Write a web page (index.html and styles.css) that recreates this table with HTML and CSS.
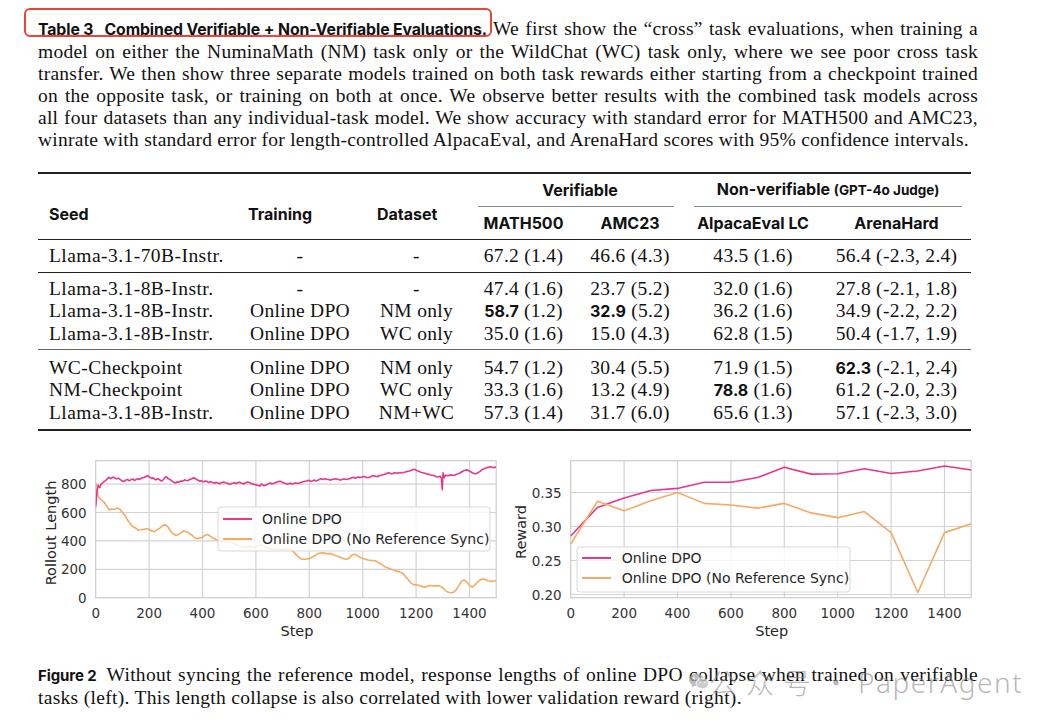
FILE: index.html
```html
<!DOCTYPE html>
<html lang="en">

<head>
    <meta charset="UTF-8">
    <meta name="viewport" content="width=device-width, initial-scale=1.0">
    <title>Table 3 / Figure 2</title>
    <link rel="stylesheet" href="styles.css">
</head>

<body>
    <div class="page">
        <!-- 表格标题 -->
        <div class="cap">
            <div class="mark"></div>
            <div class="ln"><b class="lbl">Table 3<span class="ttl">Combined Verifiable + Non-Verifiable Evaluations.</span></b> We first show the “cross” task evaluations, when training a</div>
            <div class="ln">model on either the NuminaMath (NM) task only or the WildChat (WC) task only, where we see poor cross task</div>
            <div class="ln">transfer. We then show three separate models trained on both task rewards either starting from a checkpoint trained</div>
            <div class="ln">on the opposite task, or training on both at once. We observe better results with the combined task models across</div>
            <div class="ln">all four datasets than any individual-task model. We show accuracy with standard error for MATH500 and AMC23,</div>
            <div class="ln last">winrate with standard error for length-controlled AlpacaEval, and ArenaHard scores with 95% confidence intervals.</div>
        </div>

        <!-- 结果表 -->
        <table class="tbl">
            <colgroup>
                <col class="c-seed">
                <col class="c-train">
                <col class="c-data">
                <col class="c-math">
                <col class="c-amc">
                <col class="c-alp">
                <col class="c-arena">
            </colgroup>
            <thead>
                <tr class="hd-top">
                    <th rowspan="2" class="side seed">Seed</th>
                    <th rowspan="2" class="side train">Training</th>
                    <th rowspan="2" class="side data">Dataset</th>
                    <th colspan="2"><div class="grp grp-v">Verifiable</div></th>
                    <th colspan="2"><div class="grp grp-n">Non-verifiable <small>(GPT-4o Judge)</small></div></th>
                </tr>
                <tr class="hd-sub">
                    <th>MATH500</th>
                    <th>AMC23</th>
                    <th>AlpacaEval LC</th>
                    <th>ArenaHard</th>
                </tr>
            </thead>
            <tbody class="g1">
                <tr>
                    <td>Llama-3.1-70B-Instr.</td><td>-</td><td>-</td>
                    <td>67.2 (1.4)</td><td>46.6 (4.3)</td><td>43.5 (1.6)</td><td>56.4 (-2.3, 2.4)</td>
                </tr>
            </tbody>
            <tbody class="g2">
                <tr>
                    <td>Llama-3.1-8B-Instr.</td><td>-</td><td>-</td>
                    <td>47.4 (1.6)</td><td>23.7 (5.2)</td><td>32.0 (1.6)</td><td>27.8 (-2.1, 1.8)</td>
                </tr>
                <tr>
                    <td>Llama-3.1-8B-Instr.</td><td>Online DPO</td><td>NM only</td>
                    <td><b class="bn">58.7</b> (1.2)</td><td><b class="bn">32.9</b> (5.2)</td><td>36.2 (1.6)</td><td>34.9 (-2.2, 2.2)</td>
                </tr>
                <tr>
                    <td>Llama-3.1-8B-Instr.</td><td>Online DPO</td><td>WC only</td>
                    <td>35.0 (1.6)</td><td>15.0 (4.3)</td><td>62.8 (1.5)</td><td>50.4 (-1.7, 1.9)</td>
                </tr>
            </tbody>
            <tbody class="g3">
                <tr>
                    <td>WC-Checkpoint</td><td>Online DPO</td><td>NM only</td>
                    <td>54.7 (1.2)</td><td>30.4 (5.5)</td><td>71.9 (1.5)</td><td><b class="bn">62.3</b> (-2.1, 2.4)</td>
                </tr>
                <tr>
                    <td>NM-Checkpoint</td><td>Online DPO</td><td>WC only</td>
                    <td>33.3 (1.6)</td><td>13.2 (4.9)</td><td><b class="bn">78.8</b> (1.6)</td><td>61.2 (-2.0, 2.3)</td>
                </tr>
                <tr>
                    <td>Llama-3.1-8B-Instr.</td><td>Online DPO</td><td>NM+WC</td>
                    <td>57.3 (1.4)</td><td>31.7 (6.0)</td><td>65.6 (1.3)</td><td>57.1 (-2.3, 3.0)</td>
                </tr>
            </tbody>
        </table>

        <!-- 两张折线图 -->
        <div class="fig">
            <svg class="chart" width="470" height="195" viewBox="0 0 470 195">
                <defs>
                    <clipPath id="clipL"><rect x="57.7" y="10.7" width="400.5" height="137"></rect></clipPath>
                </defs>
                <g class="grid">
                    <line x1="111.1" y1="10.7" x2="111.1" y2="147.7"></line>
                    <line x1="164.5" y1="10.7" x2="164.5" y2="147.7"></line>
                    <line x1="217.9" y1="10.7" x2="217.9" y2="147.7"></line>
                    <line x1="271.3" y1="10.7" x2="271.3" y2="147.7"></line>
                    <line x1="324.7" y1="10.7" x2="324.7" y2="147.7"></line>
                    <line x1="378.1" y1="10.7" x2="378.1" y2="147.7"></line>
                    <line x1="431.5" y1="10.7" x2="431.5" y2="147.7"></line>
                    <line x1="57.7" y1="119.3" x2="458.2" y2="119.3"></line>
                    <line x1="57.7" y1="90.9" x2="458.2" y2="90.9"></line>
                    <line x1="57.7" y1="62.5" x2="458.2" y2="62.5"></line>
                    <line x1="57.7" y1="34.1" x2="458.2" y2="34.1"></line>
                </g>
                <rect class="frame" x="57.7" y="10.7" width="400.5" height="137"></rect>
                <g clip-path="url(#clipL)">
                    <g transform="translate(57.7,147.7) scale(0.267,-0.142)">
                        <polyline class="ln-o" vector-effect="non-scaling-stroke" points="0,780 5,800 8,720 12,705 20,690 30,675 40,650 50,618 60,625 70,622 80,632 90,625 100,600 110,580 120,545 130,520 140,500 150,490 160,475 170,478 180,482 190,485 200,482 210,470 220,465 230,478 240,490 250,505 260,515 270,500 280,470 290,450 300,440 310,445 320,458 330,470 340,465 350,455 360,440 370,425 380,415 390,420 400,425 410,440 420,445 430,432 440,420 450,410 460,405 470,400 480,398 490,395 500,390 510,388 520,380 530,372 540,365 550,358 560,355 570,362 580,360 590,356 600,358 610,368 620,372 630,362 640,350 650,345 660,340 670,343 680,346 690,340 700,338 710,342 720,344 730,335 740,325 750,305 760,285 770,272 780,270 790,272 800,275 810,285 820,295 830,308 840,315 850,316 860,312 870,310 880,312 890,302 900,295 910,290 920,282 930,275 940,270 950,280 960,300 970,306 980,295 990,285 1000,276 1010,270 1020,265 1030,262 1040,262 1050,258 1060,245 1070,235 1080,222 1090,212 1100,205 1110,198 1120,192 1130,186 1140,180 1150,170 1160,150 1170,128 1180,105 1190,92 1200,90 1210,88 1220,80 1230,72 1240,78 1250,85 1260,84 1270,82 1280,85 1290,80 1300,70 1310,50 1320,38 1330,35 1340,38 1350,55 1360,85 1370,115 1380,125 1390,110 1400,85 1410,75 1420,88 1430,110 1440,125 1450,132 1460,128 1470,118 1480,115 1490,118 1500,118"></polyline>
                        <polyline class="ln-p" vector-effect="non-scaling-stroke" points="0,640 5,760 10,790 15,775 20,800 25,806 30,815 35,822 40,830 45,842 50,848 55,840 60,842 65,850 70,845 75,840 80,838 85,842 90,835 95,828 100,822 105,818 110,825 115,830 120,832 125,824 130,828 135,834 140,835 145,826 150,830 155,836 160,838 165,832 170,842 175,846 180,845 185,850 190,855 195,860 200,850 205,846 210,840 215,844 220,835 225,830 230,838 235,836 240,830 245,822 250,825 255,836 260,848 265,852 270,840 275,836 280,830 285,822 290,815 295,812 300,808 305,816 310,812 315,818 320,822 325,820 330,826 335,830 340,824 345,826 350,830 355,834 360,838 365,844 370,842 375,836 380,830 385,826 390,820 395,824 400,818 405,816 410,822 415,820 420,815 425,812 430,818 435,814 440,810 445,806 450,812 455,810 460,806 465,802 470,810 475,812 480,815 485,810 490,808 495,804 500,800 505,798 510,805 515,808 520,810 525,804 530,808 535,812 540,812 545,808 550,805 555,800 560,810 565,812 570,815 575,812 580,808 585,802 590,800 595,796 600,795 605,792 610,790 615,786 620,800 625,796 630,788 635,792 640,795 645,800 650,805 655,808 660,802 665,804 670,808 675,812 680,815 685,818 690,820 695,816 700,812 705,808 710,805 715,802 720,800 725,804 730,806 735,800 740,802 745,806 750,808 755,804 760,806 765,810 770,812 775,816 780,818 785,820 790,822 795,826 800,825 805,820 810,822 815,826 820,828 825,822 830,825 835,830 840,835 845,838 850,832 855,836 860,838 865,834 870,832 875,830 880,828 885,832 890,835 895,836 900,838 905,834 910,832 915,828 920,830 925,834 930,836 935,834 940,832 945,836 950,838 955,842 960,845 965,848 970,842 975,844 980,848 985,850 990,846 995,848 1000,852 1005,854 1010,850 1015,846 1020,845 1025,848 1030,852 1035,858 1040,860 1045,856 1050,855 1055,852 1060,858 1065,860 1070,862 1075,866 1080,868 1085,872 1090,875 1095,880 1100,878 1105,874 1110,872 1115,876 1120,880 1125,878 1130,876 1135,880 1140,882 1145,878 1150,880 1155,884 1160,885 1165,888 1170,890 1175,892 1180,895 1185,900 1190,902 1195,904 1200,898 1205,894 1210,890 1215,886 1220,882 1225,880 1230,878 1235,874 1240,872 1245,870 1250,868 1255,864 1260,862 1265,860 1270,858 1275,852 1280,850 1285,854 1290,855 1295,840 1298,760 1301,880 1305,845 1310,862 1315,860 1320,858 1325,862 1330,865 1335,862 1340,860 1345,864 1350,868 1355,872 1360,875 1365,880 1370,885 1375,890 1380,895 1385,898 1390,900 1395,896 1400,892 1405,886 1410,880 1415,876 1420,872 1425,874 1430,878 1435,884 1440,890 1445,898 1450,905 1455,908 1460,912 1465,916 1470,918 1475,920 1480,922 1485,918 1490,915 1495,918 1500,920"></polyline>
                    </g>
                </g>
                <g class="legend">
                    <rect class="lg-box" x="180" y="57" width="272" height="44" rx="3"></rect>
                    <line class="lk-p" x1="185" y1="69" x2="214" y2="69"></line>
                    <line class="lk-o" x1="185" y1="89" x2="214" y2="89"></line>
                    <text x="224" y="74">Online DPO</text>
                    <text x="224" y="94">Online DPO (No Reference Sync)</text>
                </g>
                <g class="ticks">
                    <text class="yt" x="48.7" y="152.7">0</text>
                    <text class="yt" x="48.7" y="124.3">200</text>
                    <text class="yt" x="48.7" y="95.9">400</text>
                    <text class="yt" x="48.7" y="67.5">600</text>
                    <text class="yt" x="48.7" y="39.1">800</text>
                    <text class="xt" x="57.7" y="168">0</text>
                    <text class="xt" x="111.1" y="168">200</text>
                    <text class="xt" x="164.5" y="168">400</text>
                    <text class="xt" x="217.9" y="168">600</text>
                    <text class="xt" x="271.3" y="168">800</text>
                    <text class="xt" x="324.7" y="168">1000</text>
                    <text class="xt" x="378.1" y="168">1200</text>
                    <text class="xt" x="431.5" y="168">1400</text>
                </g>
                <text class="axl" x="259" y="185.5">Step</text>
                <text class="axl" transform="translate(17.5,83) rotate(-90)">Rollout Length</text>
            </svg>

            <svg class="chart" width="470" height="195" viewBox="0 0 470 195">
                <defs>
                    <clipPath id="clipR"><rect x="62.7" y="10.7" width="400.5" height="137"></rect></clipPath>
                </defs>
                <g class="grid">
                    <line x1="116.1" y1="10.7" x2="116.1" y2="147.7"></line>
                    <line x1="169.5" y1="10.7" x2="169.5" y2="147.7"></line>
                    <line x1="222.9" y1="10.7" x2="222.9" y2="147.7"></line>
                    <line x1="276.3" y1="10.7" x2="276.3" y2="147.7"></line>
                    <line x1="329.7" y1="10.7" x2="329.7" y2="147.7"></line>
                    <line x1="383.1" y1="10.7" x2="383.1" y2="147.7"></line>
                    <line x1="436.5" y1="10.7" x2="436.5" y2="147.7"></line>
                    <line x1="62.7" y1="144.5" x2="463.2" y2="144.5"></line>
                    <line x1="62.7" y1="110.5" x2="463.2" y2="110.5"></line>
                    <line x1="62.7" y1="76.5" x2="463.2" y2="76.5"></line>
                    <line x1="62.7" y1="42.5" x2="463.2" y2="42.5"></line>
                </g>
                <rect class="frame" x="62.7" y="10.7" width="400.5" height="137"></rect>
                <g clip-path="url(#clipR)">
                    <g transform="translate(62.7,144.5) scale(0.267,-0.68)">
                        <polyline class="ln-p" vector-effect="non-scaling-stroke" points="0,86 100,128 200,142 300,153 400,156 500,165 600,165 700,172 800,187 900,177 1000,177.5 1100,185 1200,178 1300,181.6 1400,189 1500,183"></polyline>
                        <polyline class="ln-o" vector-effect="non-scaling-stroke" points="0,74 100,137 200,123 300,138 400,150 500,134 600,131.6 700,127 800,134 900,120 1000,113 1100,122 1200,91 1300,3 1400,91 1500,104"></polyline>
                    </g>
                </g>
                <g class="legend">
                    <rect class="lg-box" x="69" y="97" width="273" height="45" rx="3"></rect>
                    <line class="lk-p" x1="74" y1="108" x2="103" y2="108"></line>
                    <line class="lk-o" x1="74" y1="128" x2="103" y2="128"></line>
                    <text x="113.7" y="113">Online DPO</text>
                    <text x="113.7" y="133">Online DPO (No Reference Sync)</text>
                </g>
                <g class="ticks">
                    <text class="yt" x="53.7" y="149.5">0.20</text>
                    <text class="yt" x="53.7" y="115.5">0.25</text>
                    <text class="yt" x="53.7" y="81.5">0.30</text>
                    <text class="yt" x="53.7" y="47.5">0.35</text>
                    <text class="xt" x="62.7" y="168">0</text>
                    <text class="xt" x="116.1" y="168">200</text>
                    <text class="xt" x="169.5" y="168">400</text>
                    <text class="xt" x="222.9" y="168">600</text>
                    <text class="xt" x="276.3" y="168">800</text>
                    <text class="xt" x="329.7" y="168">1000</text>
                    <text class="xt" x="383.1" y="168">1200</text>
                    <text class="xt" x="436.5" y="168">1400</text>
                </g>
                <text class="axl" x="263.7" y="185.5">Step</text>
                <text class="axl" transform="translate(17.5,82) rotate(-90)">Reward</text>
            </svg>
        </div>

        <!-- 图注 + 水印 -->
        <div class="figcap">
            <div class="ln"><b class="lbl">Figure 2</b> Without syncing the reference model, response lengths of online DPO collapse when trained on verifiable</div>
            <div class="ln last">tasks (left). This length collapse is also correlated with lower validation reward (right).</div>
            <div class="wm">
                <svg class="wx" width="20" height="19" viewBox="0 0 24 22">
                    <ellipse cx="9" cy="9" rx="9" ry="7.5" fill="#a9a9a9"></ellipse>
                    <path d="M4 14 L3 18.5 L7.5 15.8 Z" fill="#a9a9a9"></path>
                    <ellipse cx="16" cy="13.5" rx="7.5" ry="6.2" fill="#bdbdbd" stroke="#fff" stroke-width="1"></ellipse>
                    <circle cx="6" cy="7" r="1.1" fill="#fff"></circle>
                    <circle cx="12" cy="7" r="1.1" fill="#fff"></circle>
                    <circle cx="13.5" cy="12.5" r="0.9" fill="#fff"></circle>
                    <circle cx="18.5" cy="12.5" r="0.9" fill="#fff"></circle>
                </svg>
                <span class="wm-cn">公众号</span><span class="wm-dot">·</span><span class="wm-en">PaperAgent</span>
            </div>
        </div>
    </div>
</body>

</html>
```

FILE: styles.css
```css
* {
    padding: 0;
    margin: 0;
    box-sizing: border-box;
}

body {
    background-color: #fff;
    color: #111;
    font-family: "Liberation Serif", "Times New Roman", serif;
}

.page {
    padding: 18px 0 0 38px;
}

/* 标题段落，逐行两端对齐 */
.cap {
    position: relative;
    width: 940px;
    font-size: 19.5px;
    line-height: 22px;
    letter-spacing: 0.25px;
}

.ln {
    text-align: justify;
    text-align-last: justify;
}

.ln.last {
    text-align-last: left;
}

/* 粗体无衬线标签，不参与两端对齐拉伸 */
.lbl {
    display: inline-block;
    font-family: Inter, "Liberation Sans", sans-serif;
    font-weight: 700;
    font-size: 15.8px;
    letter-spacing: -0.1px;
    white-space: nowrap;
}

.lbl .ttl {
    margin-left: 11px;
}

/* 红色标注框 */
.cap .mark {
    position: absolute;
    left: -14px;
    top: -10px;
    width: 468px;
    height: 29px;
    border: 2px solid #e8453c;
    border-radius: 6px;
}

/* 表格 */
.tbl {
    margin-top: 21px;
    width: 933px;
    border-collapse: collapse;
    table-layout: fixed;
    font-size: 19.5px;
}

.c-seed { width: 200px; }
.c-train { width: 124px; }
.c-data { width: 109px; }
.c-math { width: 105px; }
.c-amc { width: 108px; }
.c-alp { width: 138px; }
.c-arena { width: 149px; }

.tbl thead {
    border-top: 2px solid #222;
    border-bottom: 1px solid #222;
}

.tbl th {
    font-family: Inter, "Liberation Sans", sans-serif;
    font-weight: 700;
    font-size: 16px;
    color: #111;
    text-align: center;
    padding: 0;
}

.tbl th.side {
    text-align: left;
    vertical-align: bottom;
    line-height: 20px;
    padding-bottom: 15px;
}

.tbl th.seed { padding-left: 11px; }
.tbl th.train { padding-left: 10px; }
.tbl th.data { padding-left: 15px; }

.hd-top th {
    height: 33px;
    vertical-align: bottom;
}

.hd-top .grp {
    line-height: 31px;
    border-bottom: 1.5px solid #8a8a8a;
}

.hd-top .grp-v {
    margin: 0 10px 0 7px;
    padding-left: 8px;
}

.hd-top .grp-n {
    margin: 0 9px 0 10px;
}

.hd-top small {
    font-size: 13.5px;
}

.hd-sub th {
    height: 32px;
    line-height: 32px;
}

.tbl td {
    height: 22.5px;
    line-height: 22px;
    padding: 0;
    text-align: center;
    white-space: nowrap;
    letter-spacing: 0.3px;
}

.tbl td:first-child {
    text-align: left;
    padding-left: 11px;
    letter-spacing: 0.45px;
}

.tbl .bn {
    font-family: Inter, "Liberation Sans", sans-serif;
    font-weight: 700;
    font-size: 16px;
    line-height: 16px;
    letter-spacing: 0;
}

.tbl tbody.g1 td { padding-top: 4.5px; padding-bottom: 5.5px; height: 33px; }
.tbl tbody.g2 { border-top: 1px solid #222; }
.tbl tbody.g2 tr:first-child td { padding-top: 5px; height: 27.5px; }
.tbl tbody.g2 tr:last-child td { padding-bottom: 4.5px; height: 27px; }
.tbl tbody.g3 { border-top: 1.5px solid #666; border-bottom: 2px solid #222; }
.tbl tbody.g3 tr:first-child td { padding-top: 7px; height: 29.5px; }
.tbl tbody.g3 tr:last-child td { padding-bottom: 5px; height: 27.5px; }

/* 图 */
.fig {
    display: flex;
    margin-top: 19px;
}

.chart {
    display: block;
    font-family: "DejaVu Sans", sans-serif;
}

.chart .grid line {
    stroke: #d3d3d3;
    stroke-width: 1.2;
}

.chart .frame {
    fill: none;
    stroke: #cccccc;
    stroke-width: 1.2;
}

.chart .ln-p,
.chart .ln-o {
    fill: none;
    stroke-width: 1.6;
    stroke-linejoin: round;
}

.chart .ln-p { stroke: #e8368c; }
.chart .ln-o { stroke: #f5aa64; }

.chart .lg-box {
    fill: rgba(255, 255, 255, .8);
    stroke: #d8d8d8;
    stroke-width: 1;
}

.chart .lk-p,
.chart .lk-o {
    stroke-width: 2;
}

.chart .lk-p { stroke: #e8368c; }
.chart .lk-o { stroke: #f5aa64; }

.chart .legend text {
    font-size: 14px;
    fill: #262626;
}

.chart .ticks text {
    font-size: 13.5px;
    fill: #333;
}

.chart .yt { text-anchor: end; }
.chart .xt { text-anchor: middle; }

.chart .axl {
    font-size: 14.5px;
    fill: #262626;
    text-anchor: middle;
}

/* 图注 */
.figcap {
    position: relative;
    width: 940px;
    margin-top: 19px;
    font-size: 19.5px;
    line-height: 22px;
    letter-spacing: 0.3px;
}

.figcap .lbl {
    font-size: 15px;
    margin-right: 4px;
}

/* 水印 */
.figcap .wm {
    position: absolute;
    left: 651px;
    top: 4px;
    display: flex;
    align-items: center;
    font-family: "Noto Sans CJK SC", "Noto Sans", sans-serif;
    font-weight: 300;
    font-size: 28px;
    line-height: 28px;
    letter-spacing: 0;
    color: rgba(135, 135, 135, .6);
    white-space: nowrap;
}

.wm .wx {
    opacity: .75;
    margin-right: 0;
}

.wm .wm-cn {
    letter-spacing: 9px;
}

.wm .wm-dot {
    margin: 0 8px 0 2px;
}

.wm .wm-en {
    font-family: "Noto Sans", sans-serif;
    font-weight: 300;
    letter-spacing: 1.5px;
}
```
